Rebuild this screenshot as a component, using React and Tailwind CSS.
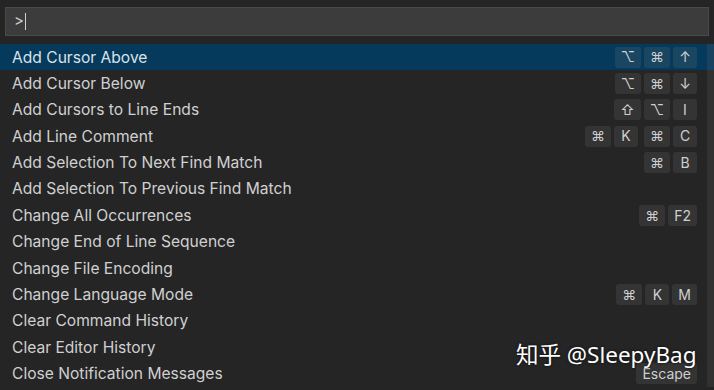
import React from "react";

const rows = [
  { label: "Add Cursor Above", keys: [["⌥", "⌘", "↑"]] },
  { label: "Add Cursor Below", keys: [["⌥", "⌘", "↓"]] },
  { label: "Add Cursors to Line Ends", keys: [["⇧", "⌥", "I"]] },
  { label: "Add Line Comment", keys: [["⌘", "K"], ["⌘", "C"]] },
  { label: "Add Selection To Next Find Match", keys: [["⌘", "B"]] },
  { label: "Add Selection To Previous Find Match", keys: [] },
  { label: "Change All Occurrences", keys: [["⌘", "F2"]] },
  { label: "Change End of Line Sequence", keys: [] },
  { label: "Change File Encoding", keys: [] },
  { label: "Change Language Mode", keys: [["⌘", "K", "M"]] },
  { label: "Clear Command History", keys: [] },
  { label: "Clear Editor History", keys: [] },
  { label: "Close Notification Messages", keys: [["Escape"]] },
];

function Key({ k }) {
  return (
    <span className="flex h-[21px] min-w-[24px] items-center justify-center rounded-[3px] bg-[rgba(128,128,128,0.17)] px-[6px] text-[14px] leading-none text-[#cfcfcf]">
      {k}
    </span>
  );
}

export default function App() {
  return (
    <div
      className="relative h-[390px] w-[714px] overflow-hidden bg-[#252526] text-[#d0d0d0]"
      style={{ fontFamily: "Inter, 'Noto Sans', sans-serif" }}
    >
      <div className="px-[5px] pt-[7px] pb-[8px]">
        <div className="flex h-[29px] items-center border border-[#4a4a4a] bg-[#3c3c3c] pl-[8px] text-[15px] text-[#cccccc]">
          <span>&gt;</span>
          <span className="ml-[1px] h-[17px] w-[1px] bg-[#d0d0d0]" />
        </div>
      </div>
      <div className="relative">
        {rows.map((r, i) => (
          <div
            key={r.label}
            className={
              "flex h-[26.4px] items-center justify-between pl-[12px] pr-[17px] text-[15.6px] " +
              (i === 0 ? "bg-[#063a5c] text-[#d8e2ea]" : "")
            }
          >
            <span className="whitespace-nowrap">{r.label}</span>
            <div className="flex gap-[6px]">
              {r.keys.map((chord, ci) => (
                <div key={ci} className="flex gap-[3px]">
                  {chord.map((k, ki) => (
                    <Key key={ki} k={k} />
                  ))}
                </div>
              ))}
            </div>
          </div>
        ))}
        <div className="absolute right-0 top-0 h-full w-[7px] bg-[rgba(121,121,121,0.15)]" />
      </div>
      <div
        className="absolute left-[516px] top-[338px] whitespace-nowrap text-[22.5px] text-white"
        style={{
          fontFamily: "'Noto Sans', 'Noto Sans CJK SC', sans-serif",
          textShadow: "0 0 3px rgba(0,0,0,0.8)",
        }}
      >
        知乎 @SleepyBag
      </div>
    </div>
  );
}
